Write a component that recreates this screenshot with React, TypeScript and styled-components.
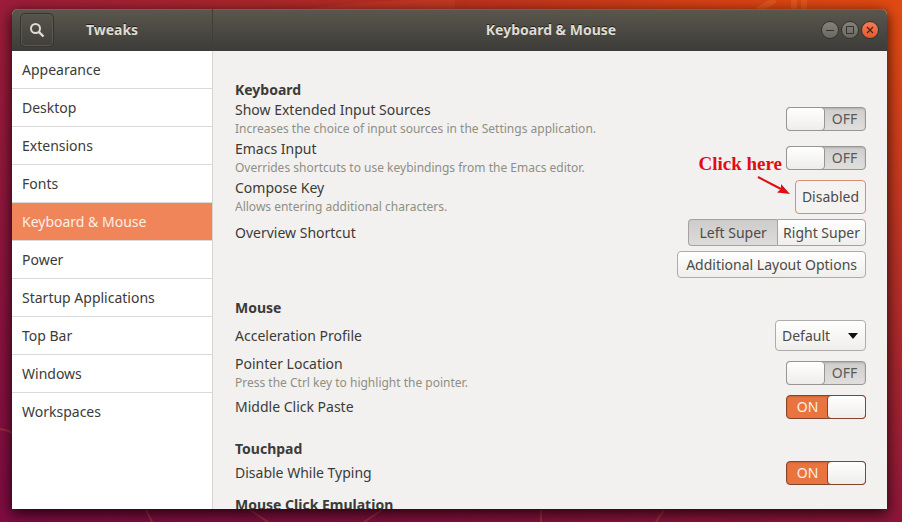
import React, { useState } from "react";
import styled, { createGlobalStyle, css } from "styled-components";

const GlobalStyle = createGlobalStyle`
  *, *::before, *::after { box-sizing: border-box; }
  body {
    margin: 0;
    font-family: "Noto Sans", "Open Sans", sans-serif;
    font-size: 14px;
    line-height: 20px;
    color: #3c3b37;
  }
  button, select, input { font: inherit; color: inherit; }
`;

const Desktop = styled.div`
  position: relative;
  height: 100vh;
  padding: 9px 15px 13px 12px;
  overflow: hidden;
  background:
    linear-gradient(to bottom, transparent 5%, rgba(120, 8, 68, 0.8) 100%),
    linear-gradient(to right, #9c1c3a 0%, #b32c24 40%, #d84214 80%, #e24a12 100%);
`;

const Wallpaper = styled.svg`
  position: absolute;
  inset: 0;
  width: 100%;
  height: 100%;
`;

const Window = styled.div`
  position: relative;
  display: grid;
  grid-template-columns: 201px 1fr;
  grid-template-rows: 42px 1fr;
  height: 100%;
  overflow: hidden;
  border-radius: 6px 6px 0 0;
  background: #f2f1f0;
`;

const WindowShadow = styled.div`
  position: relative;
  height: 100%;
  border-radius: 6px 6px 0 0;
  box-shadow: 0 4px 14px 1px rgba(0, 0, 0, 0.75);
`;

const headerBar = css`
  display: flex;
  align-items: center;
  background: linear-gradient(to bottom, #5b574e 0%, #4b4943 50%, #3d3c38 100%);
  box-shadow: inset 0 1px #6a665c;
  color: #dfdbd2;
`;

const SideHeader = styled.header`
  ${headerBar}
  padding: 0 8px;
  border-right: 1px solid #3f3e39;
`;

const MainHeader = styled.header`
  ${headerBar}
  padding: 0 8px 0 68px;
`;

const Title = styled.h1`
  flex: 1;
  margin: 0;
  font-size: 14px;
  line-height: 20px;
  font-weight: 700;
  text-align: center;
  text-shadow: 0 -1px rgba(0, 0, 0, 0.6);
`;

const SideTitle = styled(Title)`
  padding-right: 34px;
`;

const SearchButton = styled.button`
  display: grid;
  place-items: center;
  width: 34px;
  height: 34px;
  padding: 0;
  border: 1px solid #35342f;
  border-radius: 5px;
  background: transparent;
  box-shadow: inset 0 0 0 1px #5a574f;
`;

const WindowControls = styled.div`
  display: flex;
  gap: 2px;
`;

const ControlButton = styled.button<{ $close?: boolean }>`
  display: grid;
  place-items: center;
  width: 18px;
  height: 18px;
  padding: 0;
  border: 1px solid #33322e;
  border-radius: 50%;
  background: ${(p) =>
    p.$close
      ? "linear-gradient(to bottom, #f27c55, #e35b2c)"
      : "linear-gradient(to bottom, #85827a, #6b6861)"};
`;

const Sidebar = styled.nav`
  border-right: 1px solid #d8d5d2;
  background: #fff;
`;

const SidebarLink = styled.a<{ $active?: boolean }>`
  display: block;
  padding: 9px 10px 8px;
  border-bottom: 1px solid #dcdad8;
  color: ${(p) => (p.$active ? "#fdeee6" : "#3c3b37")};
  background: ${(p) => (p.$active ? "#f0855a" : "transparent")};
  text-decoration: none;

  &:last-child { border-bottom: 0; }
`;

const Content = styled.main`
  min-height: 0;
  overflow: hidden;
  padding: 29px 21px 0 22px;
`;

const Section = styled.section`
  display: flex;
  flex-direction: column;
  margin-bottom: 20px;
`;

const TouchpadSection = styled(Section)`
  margin-bottom: 10px;
`;

const SectionTitle = styled.h2`
  margin: 0;
  font-size: 14px;
  line-height: 20px;
  font-weight: 700;
`;

const Row = styled.div<{ $gap?: number; $described: boolean }>`
  position: relative;
  display: flex;
  align-items: center;
  justify-content: space-between;
  margin-top: ${(p) => p.$gap ?? 0}px;
  padding-bottom: ${(p) => (p.$described ? 1 : 0)}px;
`;

const Texts = styled.div`
  display: flex;
  flex-direction: column;
`;

const Name = styled.label`
  line-height: 20px;
`;

const Description = styled.span`
  font-size: 12px;
  line-height: 18px;
  color: #8f8f82;
`;

const SwitchTrack = styled.span<{ $on: boolean }>`
  position: relative;
  display: flex;
  flex-direction: ${(p) => (p.$on ? "row-reverse" : "row")};
  width: 80px;
  height: 24px;
  border: 1px solid ${(p) => (p.$on ? "#84452c" : "#989692")};
  border-radius: 4px;
  color: ${(p) => (p.$on ? "#fdeee6" : "#5a5955")};
  background: ${(p) =>
    p.$on ? "#e9743f" : "linear-gradient(to bottom, #cfcecd, #e0dfde)"};
  box-shadow: inset 0 1px 2px rgba(0, 0, 0, 0.15);
`;

const SwitchInput = styled.input`
  position: absolute;
  inset: 0;
  width: 100%;
  height: 100%;
  margin: 0;
  opacity: 0;
`;

const Knob = styled.span<{ $on: boolean }>`
  width: 39px;
  margin: -1px;
  border: 1px solid ${(p) => (p.$on ? "#84452c" : "#989692")};
  border-radius: 4px;
  background: linear-gradient(to bottom, #fff, #eeedeb);
`;

const SwitchText = styled.span`
  flex: 1;
  text-align: center;
  line-height: 22px;
`;

const Button = styled.button<{ $tall?: boolean; $focused?: boolean }>`
  height: ${(p) => (p.$tall ? 34 : 27)}px;
  padding: 0 ${(p) => (p.$tall ? 6 : 8)}px;
  border: 1px solid ${(p) => (p.$focused ? "#d58e75" : "#aeaca8")};
  border-radius: 4px;
  color: #4c4b47;
  background: ${(p) =>
    p.$focused ? "#f5f3f2" : "linear-gradient(to bottom, #fff, #efeeec)"};
`;

const ButtonGroup = styled.div`
  display: grid;
  grid-template-columns: 1fr 1fr;
`;

const Segment = styled.button<{ $pressed: boolean }>`
  height: 27px;
  padding: 0 5px;
  border: 1px solid #a5a39f;
  color: #4c4b47;
  background: ${(p) =>
    p.$pressed
      ? "linear-gradient(to bottom, #cdcccb, #dddcdb)"
      : "linear-gradient(to bottom, #fff, #efeeec)"};

  &:first-child { border-radius: 4px 0 0 4px; border-right-width: 0; }
  &:last-child { border-radius: 0 4px 4px 0; }
`;

const EndRow = styled.div`
  display: flex;
  justify-content: flex-end;
  margin-top: 5px;
`;

const SelectWrap = styled.div`
  position: relative;
`;

const Select = styled.select`
  appearance: none;
  width: 91px;
  height: 31px;
  padding: 0 26px 0 6px;
  border: 1px solid #aeaca8;
  border-radius: 4px;
  color: #4c4b47;
  background: linear-gradient(to bottom, #fff, #efeeec);
`;

const SelectArrow = styled.svg`
  position: absolute;
  top: 13px;
  right: 8px;
  pointer-events: none;
`;

const Callout = styled.div`
  position: absolute;
  right: 76px;
  bottom: 20px;
  display: flex;
  flex-direction: column;
  align-items: flex-start;
  font: 700 19px/22px "Liberation Serif", serif;
  color: #e00d12;
`;

const CalloutText = styled.span`
  margin-right: 8px;
`;

const CalloutArrow = styled.svg`
  align-self: flex-end;
`;

function Switch({ id, initial = false }: { id: string; initial?: boolean }) {
  const [on, setOn] = useState(initial);
  return (
    <SwitchTrack $on={on}>
      <SwitchInput
        id={id}
        type="checkbox"
        role="switch"
        checked={on}
        onChange={(e) => setOn(e.target.checked)}
      />
      <Knob $on={on} />
      <SwitchText aria-hidden="true">{on ? "ON" : "OFF"}</SwitchText>
    </SwitchTrack>
  );
}

interface SettingProps {
  id: string;
  name: string;
  description?: string;
  gap?: number;
  children: React.ReactNode;
}

function Setting({ id, name, description, gap, children }: SettingProps) {
  return (
    <Row $gap={gap} $described={Boolean(description)}>
      <Texts>
        <Name htmlFor={id}>{name}</Name>
        {description && <Description>{description}</Description>}
      </Texts>
      {children}
    </Row>
  );
}

const pages = [
  "Appearance",
  "Desktop",
  "Extensions",
  "Fonts",
  "Keyboard & Mouse",
  "Power",
  "Startup Applications",
  "Top Bar",
  "Windows",
  "Workspaces",
];

export default function App() {
  const [superKey, setSuperKey] = useState("Left Super");
  return (
    <Desktop>
      <GlobalStyle />
      <Wallpaper viewBox="0 0 902 522" preserveAspectRatio="none" aria-hidden="true">
        <path d="M300 10Q370 0 420 0H455V10Z" fill="#ff6a3c" fillOpacity="0.12" />
        <g fill="none" stroke="#ff9a3c" strokeOpacity="0.2">
          <path d="M758 10L775 0M794 0V10M804 0V10" strokeWidth="6" />
          <path d="M0 429Q8 430 14 434M146 510L152 522M250 510L268 522M382 510L364 522M541 510V522M664 510L656 522" strokeWidth="2" />
        </g>
      </Wallpaper>
      <WindowShadow>
        <Window>
          <SideHeader>
            <SearchButton aria-label="Search">
              <svg width="16" height="16" viewBox="0 0 16 16" fill="none" stroke="#dfdbd2">
                <circle cx="6.5" cy="6.5" r="4.5" strokeWidth="2" />
                <path d="M9.8 9.8L14.5 14.5" strokeWidth="2.4" />
              </svg>
            </SearchButton>
            <SideTitle>Tweaks</SideTitle>
          </SideHeader>
          <MainHeader>
            <Title as="h2">Keyboard &amp; Mouse</Title>
            <WindowControls>
              <ControlButton aria-label="Minimize">
                <svg width="10" height="10" viewBox="0 0 10 10" stroke="#33322e">
                  <path d="M1 5.5H9" />
                </svg>
              </ControlButton>
              <ControlButton aria-label="Maximize">
                <svg width="10" height="10" viewBox="0 0 10 10" fill="none" stroke="#33322e">
                  <path d="M1.5 1.5H8.5V8.5H1.5Z" />
                </svg>
              </ControlButton>
              <ControlButton $close aria-label="Close">
                <svg width="10" height="10" viewBox="0 0 10 10" stroke="#4a2212" strokeWidth="1.2">
                  <path d="M2 2L8 8M8 2L2 8" />
                </svg>
              </ControlButton>
            </WindowControls>
          </MainHeader>
          <Sidebar>
            {pages.map((page) => (
              <SidebarLink
                key={page}
                href="#"
                $active={page === "Keyboard & Mouse"}
                aria-current={page === "Keyboard & Mouse" ? "page" : undefined}
              >
                {page}
              </SidebarLink>
            ))}
          </Sidebar>
          <Content>
            <Section>
              <SectionTitle>Keyboard</SectionTitle>
              <Setting
                id="extended"
                name="Show Extended Input Sources"
                description="Increases the choice of input sources in the Settings application."
              >
                <Switch id="extended" />
              </Setting>
              <Setting
                id="emacs"
                name="Emacs Input"
                description="Overrides shortcuts to use keybindings from the Emacs editor."
              >
                <Switch id="emacs" />
              </Setting>
              <Setting id="compose" name="Compose Key" description="Allows entering additional characters.">
                <Button id="compose" $tall $focused>Disabled</Button>
                <Callout>
                  <CalloutText>Click here</CalloutText>
                  <CalloutArrow width="34" height="22" viewBox="0 0 34 22" aria-hidden="true">
                    <path d="M2 2L25 14" stroke="#e00d12" strokeWidth="2" />
                    <path d="M34 19L21 17.5L25 14L25 9Z" fill="#e00d12" />
                  </CalloutArrow>
                </Callout>
              </Setting>
              <Setting id="overview" name="Overview Shortcut" gap={2}>
                <ButtonGroup>
                  {["Left Super", "Right Super"].map((key, i) => (
                    <Segment
                      key={key}
                      id={i === 0 ? "overview" : undefined}
                      $pressed={superKey === key}
                      aria-pressed={superKey === key}
                      onClick={() => setSuperKey(key)}
                    >
                      {key}
                    </Segment>
                  ))}
                </ButtonGroup>
              </Setting>
              <EndRow>
                <Button>Additional Layout Options</Button>
              </EndRow>
            </Section>
            <Section>
              <SectionTitle>Mouse</SectionTitle>
              <Setting id="acceleration" name="Acceleration Profile" gap={2}>
                <SelectWrap>
                  <Select id="acceleration" defaultValue="Default">
                    <option>Default</option>
                    <option>Adaptive</option>
                    <option>Flat</option>
                  </Select>
                  <SelectArrow width="10" height="6" viewBox="0 0 10 6" aria-hidden="true">
                    <path d="M0 0H10L5 6Z" fill="#111" />
                  </SelectArrow>
                </SelectWrap>
              </Setting>
              <Setting
                id="pointer"
                name="Pointer Location"
                description="Press the Ctrl key to highlight the pointer."
                gap={3}
              >
                <Switch id="pointer" />
              </Setting>
              <Setting id="paste" name="Middle Click Paste" gap={2}>
                <Switch id="paste" initial />
              </Setting>
            </Section>
            <TouchpadSection>
              <SectionTitle>Touchpad</SectionTitle>
              <Setting id="typing" name="Disable While Typing" gap={2}>
                <Switch id="typing" initial />
              </Setting>
            </TouchpadSection>
            <Section>
              <SectionTitle>Mouse Click Emulation</SectionTitle>
            </Section>
          </Content>
        </Window>
      </WindowShadow>
    </Desktop>
  );
}
